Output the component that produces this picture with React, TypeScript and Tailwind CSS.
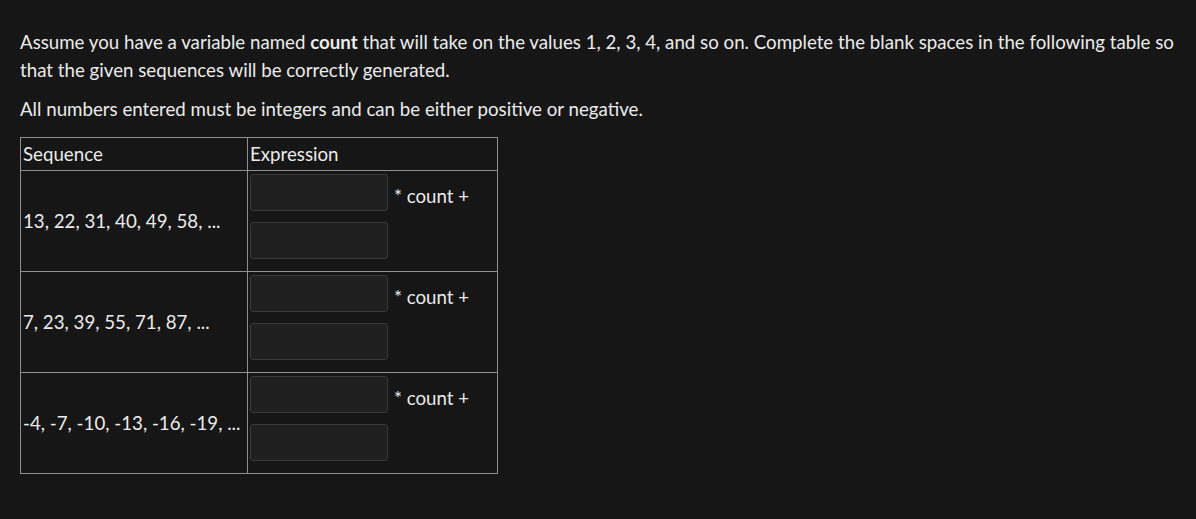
import React from "react";

const rows = [
  "13, 22, 31, 40, 49, 58, ...",
  "7, 23, 39, 55, 71, 87, ...",
  "-4, -7, -10, -13, -16, -19, ...",
];

export default function App() {
  return (
    <div
      className="min-h-[519px] w-full bg-[#161616] text-[#ebebeb] px-5 pt-[28px]"
      style={{ fontFamily: "Lato, 'Noto Sans', sans-serif" }}
    >
      <p className="text-[18.7px] leading-[28px] w-[1160px]">
        Assume you have a variable named <b className="font-bold">count</b> that will take on the values 1, 2, 3, 4, and so on. Complete the blank spaces in the following table so that the given sequences will be correctly generated.
      </p>
      <p className="text-[18.7px] leading-[28px] mt-[11px]">
        All numbers entered must be integers and can be either positive or negative.
      </p>
      <table className="mt-[14px] border-collapse text-[18.7px] leading-[26px]">
        <thead>
          <tr>
            <th className="border border-[#8f8f8f] w-[227px] h-[33px] px-[2px] text-left font-normal align-middle">
              Sequence
            </th>
            <th className="border border-[#8f8f8f] w-[250px] h-[33px] px-[2px] text-left font-normal align-middle">
              Expression
            </th>
          </tr>
        </thead>
        <tbody>
          {rows.map((r) => (
            <tr key={r}>
              <td className="border border-[#8f8f8f] h-[101px] px-[2px] align-middle whitespace-nowrap">
                {r}
              </td>
              <td className="border border-[#8f8f8f] h-[101px] pl-[2px] pr-2 pt-[3px] pb-[12px] align-top">
                <div className="flex items-center gap-[6px]">
                  <input
                    type="text"
                    className="w-[138px] h-[37px] rounded-[3px] border border-[#3a3a3a] bg-[#1f1f1f] outline-none"
                  />
                  <span className="pt-[6px]">* count +</span>
                </div>
                <input
                  type="text"
                  className="mt-[11px] block w-[138px] h-[37px] rounded-[3px] border border-[#3a3a3a] bg-[#1f1f1f] outline-none"
                />
              </td>
            </tr>
          ))}
        </tbody>
      </table>
    </div>
  );
}
